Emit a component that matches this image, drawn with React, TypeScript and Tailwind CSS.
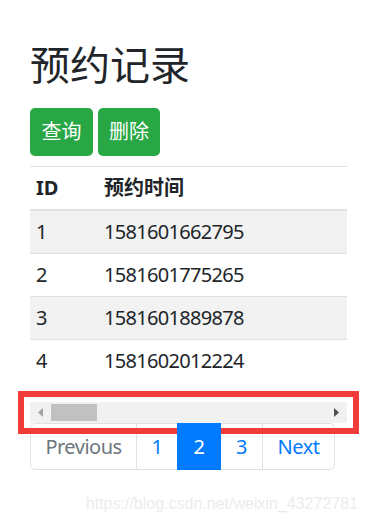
import React from 'react';

interface Record {
  id: number;
  time: string;
}

const records: Record[] = [
  { id: 1, time: '1581601662795' },
  { id: 2, time: '1581601775265' },
  { id: 3, time: '1581601889878' },
  { id: 4, time: '1581602012224' },
];

const FONT = { fontFamily: '"Noto Sans", "Noto Sans CJK SC", sans-serif' };

const ScrollBar: React.FC = () => (
  <div className="mt-[20px] flex h-[21px] bg-[#f1f1f1]">
    <div className="flex w-[21px] items-center justify-center">
      <svg width="5" height="9" viewBox="0 0 5 9">
        <path d="M5 0 L0 4.5 L5 9 Z" fill="#a3a3a3" />
      </svg>
    </div>
    <div className="my-[2px] w-[46px] bg-[#c1c1c1]" />
    <div className="flex-1" />
    <div className="flex w-[21px] items-center justify-center">
      <svg width="5" height="9" viewBox="0 0 5 9">
        <path d="M0 0 L5 4.5 L0 9 Z" fill="#505050" />
      </svg>
    </div>
  </div>
);

const Pagination: React.FC = () => (
  <ul className="flex text-[20px] leading-[25px] tracking-[-0.5px]">
    <li className="w-[107px] rounded-l-[5px] border border-[#dee2e6] py-[10px] text-center text-[#6c757d]">
      Previous
    </li>
    <li className="-ml-px w-[42px] border border-[#dee2e6] py-[10px] text-center text-[#007bff]">1</li>
    <li className="relative z-10 -ml-px w-[44px] border border-[#007bff] bg-[#007bff] py-[10px] text-center text-white">
      2
    </li>
    <li className="-ml-px w-[43px] border border-[#dee2e6] py-[10px] text-center text-[#007bff]">3</li>
    <li className="-ml-px w-[73px] rounded-r-[5px] border border-[#dee2e6] py-[10px] text-center text-[#007bff]">
      Next
    </li>
  </ul>
);

export default function App() {
  return (
    <div className="relative min-h-[522px] bg-white pl-[30px] pr-[20px] pt-[41px] text-[#212529]" style={FONT}>
      <h2 className="mb-[19px] text-[40px] font-normal leading-[48px]">预约记录</h2>

      <div className="flex gap-[5px]">
        <button className="h-[48px] w-[63px] rounded-[5px] bg-[#28a745] text-[20px] leading-[30px] text-white">
          查询
        </button>
        <button className="h-[48px] w-[62px] rounded-[5px] bg-[#28a745] text-[20px] leading-[30px] text-white">
          删除
        </button>
      </div>

      <div className="mt-[10px]">
        <table className="w-full border-collapse text-left text-[20px] leading-[30px]">
          <thead>
            <tr>
              <th className="w-[68px] border-t border-b-2 border-[#dee2e6] px-[6px] py-[6px] font-bold">ID</th>
              <th className="border-t border-b-2 border-[#dee2e6] px-[6px] py-[6px] font-bold">预约时间</th>
            </tr>
          </thead>
          <tbody className="tracking-[-0.7px]">
            {records.map((r, i) => (
              <tr key={r.id} className={i % 2 === 0 ? 'bg-[#f2f2f2]' : ''}>
                <td className="border-t border-[#dee2e6] px-[6px] py-[6px]">{r.id}</td>
                <td className="border-t border-[#dee2e6] px-[6px] py-[6px]">{r.time}</td>
              </tr>
            ))}
          </tbody>
        </table>
      </div>

      <ScrollBar />
      <Pagination />

      <div className="-mr-[11px] mt-[25px] flex justify-end">
        <span
          className="text-[16px] leading-[18px] text-[#ececec]"
          style={{ fontFamily: '"Liberation Sans", Arial, sans-serif' }}
        >
          https://blog.csdn.net/weixin_43272781
        </span>
      </div>

      {/* red annotation box */}
      <div className="pointer-events-none absolute left-[18px] top-[391px] h-[43px] w-[341px] border-[6px] border-[#f23b3b]" />
    </div>
  );
}
